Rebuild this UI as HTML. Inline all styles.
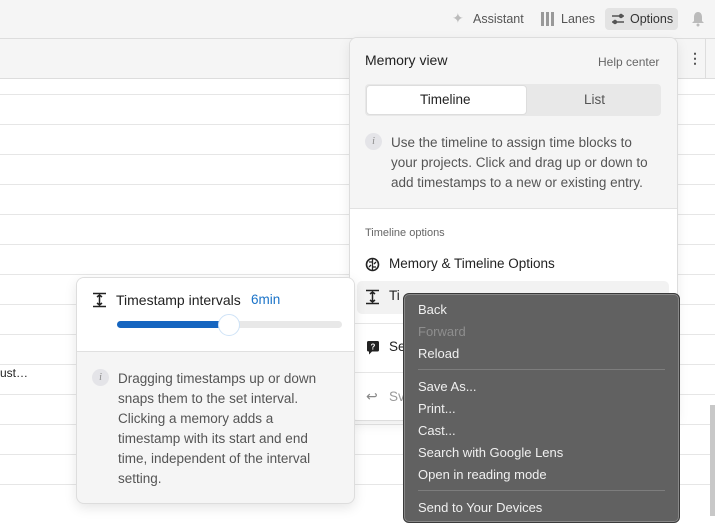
<!DOCTYPE html>
<html><head><meta charset="utf-8"><style>
*{box-sizing:border-box;margin:0;padding:0}
body{width:715px;height:516px;overflow:hidden;background:#fff;font-family:"Liberation Sans",sans-serif;position:relative;color:#222}
.abs{position:absolute}
.t{position:absolute;white-space:nowrap}
</style></head><body>
<div class="abs" style="left:0;top:0;width:715px;height:38px;background:#f5f5f5"></div>
<div class="abs" style="left:0;top:38px;width:715px;height:41px;background:#f5f5f5;border-top:1px solid #ddd;border-bottom:1px solid #ddd"></div>
<div class="abs" style="left:705px;top:38px;width:1px;height:41px;background:#ddd"></div>
<div class="t" style="left:688px;top:50px;font-size:14px;color:#555;font-weight:bold">⋮</div>
<div class="abs" style="left:0;top:94px;width:715px;height:420px;background:repeating-linear-gradient(#e6e6e6 0 1px,transparent 1px 30px)"></div>
<div class="t" style="left:0;top:366px;font-size:12px;color:#222">ust…</div>
<div class="abs" style="left:710px;top:405px;width:5px;height:111px;background:#c8c8c8"></div>
<div class="t" style="left:452px;top:10px;font-size:14px;color:#bbb">✦</div>
<div class="t" style="left:473px;top:12px;font-size:12.5px;color:#555">Assistant</div>
<div class="abs" style="left:541px;top:12px;width:14px;height:14px;background:repeating-linear-gradient(90deg,#999 0 3px,transparent 3px 5px)"></div>
<div class="t" style="left:561px;top:12px;font-size:12.5px;color:#555">Lanes</div>
<div class="abs" style="left:605px;top:8px;width:73px;height:22px;background:#e3e3e3;border-radius:4px"></div>
<svg class="abs" style="left:610px;top:12px" width="16" height="14"><path d="M2 4H14M2 10H14" stroke="#555" stroke-width="1.5"/><circle cx="11" cy="4" r="2.2" fill="#555"/><circle cx="5" cy="10" r="2.2" fill="#555"/></svg>
<div class="t" style="left:630px;top:12px;font-size:12.5px;color:#333">Options</div>
<svg class="abs" style="left:691px;top:11px" width="14" height="16"><path d="M7 1C4 1 3 4 3 6V10L1 12H13L11 10V6C11 4 10 1 7 1Z" fill="#bbb"/><circle cx="7" cy="14" r="1.5" fill="#bbb"/></svg>
<div class="abs" style="left:349px;top:37px;width:329px;height:384px;background:#fff;border:1px solid #ddd;border-radius:8px;box-shadow:0 4px 12px rgba(0,0,0,.08);overflow:hidden">
 <div class="abs" style="left:0;top:0;width:329px;height:171px;background:#f5f5f5;border-bottom:1px solid #e2e2e2"></div>
</div>
<div class="t" style="left:365px;top:52px;font-size:14px;color:#222">Memory view</div>
<div class="t" style="left:598px;top:53px;font-size:12px;color:#666;top:53px;transform:translateY(0)"><span style="position:relative;top:2px">Help center</span></div>
<div class="abs" style="left:365px;top:84px;width:296px;height:32px;background:#e8e8e8;border-radius:4px"></div>
<div class="abs" style="left:366px;top:85px;width:161px;height:30px;background:#fff;border-radius:4px;border:1px solid #ddd"></div>
<div class="t" style="left:420px;top:92px;font-size:13.5px;color:#222">Timeline</div>
<div class="t" style="left:584px;top:92px;font-size:13.5px;color:#555">List</div>
<div class="abs" style="left:365px;top:133px;width:17px;height:17px;border-radius:50%;background:#e4e4e8;color:#888;font:italic 10px 'Liberation Serif',serif;text-align:center;line-height:17px">i</div>
<div class="abs" style="left:391px;top:133px;font-size:13.5px;line-height:20px;color:#555;width:290px">Use the timeline to assign time blocks to<br>your projects. Click and drag up or down to<br>add timestamps to a new or existing entry.</div>
<div class="t" style="left:365px;top:227px;font-size:11px;color:#666">Timeline options</div>
<svg class="abs" style="left:365px;top:257px" width="15" height="15"><circle cx="7.5" cy="7.5" r="6" fill="none" stroke="#222" stroke-width="1.6"/><path d="M7.5 2V13M4 5H7M8 10H11M4 10L6 8M11 5L9 7" stroke="#222" stroke-width="1.3" fill="none"/></svg>
<div class="t" style="left:389px;top:256px;font-size:13.5px;color:#222">Memory &amp; Timeline Options</div>
<div class="abs" style="left:357px;top:281px;width:312px;height:33px;background:#f2f2f2;border-radius:5px"></div>
<svg class="abs" style="left:365px;top:289px" width="15" height="16"><path d="M1 1.5H14M1 14.5H14M7.5 3V13M5 5L7.5 3L10 5M5 11L7.5 13L10 11" stroke="#222" stroke-width="1.5" fill="none"/></svg>
<div class="t" style="left:389px;top:288px;font-size:13.5px;color:#222">Ti</div>
<div class="abs" style="left:350px;top:323px;width:327px;height:1px;background:#e6e6e6"></div>
<svg class="abs" style="left:366px;top:340px" width="14" height="16"><path d="M1 2.5Q1 1 2.5 1H11.5Q13 1 13 2.5V10Q13 11.5 11.5 11.5H6L3 14.5V11.5H2.5Q1 11.5 1 10Z" fill="#222"/><text x="7" y="9.5" font-size="8" fill="#fff" text-anchor="middle" font-family="Liberation Sans" font-weight="bold">?</text></svg>
<div class="t" style="left:389px;top:339px;font-size:13.5px;color:#222">Se</div>
<div class="abs" style="left:350px;top:372px;width:327px;height:1px;background:#e6e6e6"></div>
<div class="t" style="left:366px;top:388px;font-size:14px;color:#888">↩</div>
<div class="t" style="left:389px;top:389px;font-size:13.5px;color:#999">Sv</div>
<div class="abs" style="left:76px;top:277px;width:279px;height:227px;background:#f5f5f5;border:1px solid #ddd;border-radius:8px;box-shadow:0 4px 12px rgba(0,0,0,.1);overflow:hidden">
 <div class="abs" style="left:0;top:0;width:279px;height:74px;background:#fff;border-bottom:1px solid #e0e0e0"></div>
</div>
<svg class="abs" style="left:92px;top:292px" width="15" height="16"><path d="M1 1.5H14M1 14.5H14M7.5 3V13M5 5L7.5 3L10 5M5 11L7.5 13L10 11" stroke="#222" stroke-width="1.5" fill="none"/></svg>
<div class="t" style="left:116px;top:292px;font-size:14px;color:#222">Timestamp intervals</div>
<div class="t" style="left:251px;top:292px;font-size:13.5px;color:#1a73c8">6min</div>
<div class="abs" style="left:117px;top:321px;width:225px;height:7px;background:#e8e8e8;border-radius:4px"></div>
<div class="abs" style="left:117px;top:321px;width:112px;height:7px;background:#1565c0;border-radius:4px"></div>
<div class="abs" style="left:218px;top:314px;width:22px;height:22px;background:#fff;border:1.5px solid #cfe3f7;border-radius:50%"></div>
<div class="abs" style="left:92px;top:369px;width:17px;height:17px;border-radius:50%;background:#e4e4e8;color:#888;font:italic 10px 'Liberation Serif',serif;text-align:center;line-height:17px">i</div>
<div class="abs" style="left:118px;top:369px;font-size:13.5px;line-height:20px;color:#555;width:230px">Dragging timestamps up or down<br>snaps them to the set interval.<br>Clicking a memory adds a<br>timestamp with its start and end<br>time, independent of the interval<br>setting.</div>
<div class="abs" style="left:403px;top:293px;width:277px;height:230px;background:#616161;border:1px solid #3a3a3a;border-radius:6px;box-shadow:0 0 0 1px #888 inset"></div>
<div class="abs" style="left:418px;top:299px;font-size:13px;line-height:22px;color:#f0f0f0">
<div>Back</div><div style="color:#8e8e8e">Forward</div><div>Reload</div>
<div style="height:11px"></div>
<div>Save As...</div><div>Print...</div><div>Cast...</div><div>Search with Google Lens</div><div>Open in reading mode</div>
<div style="height:11px"></div>
<div>Send to Your Devices</div>
</div>
<div class="abs" style="left:418px;top:369px;width:247px;height:1px;background:#7d7d7d"></div>
<div class="abs" style="left:418px;top:490px;width:247px;height:1px;background:#7d7d7d"></div>
</body></html>
